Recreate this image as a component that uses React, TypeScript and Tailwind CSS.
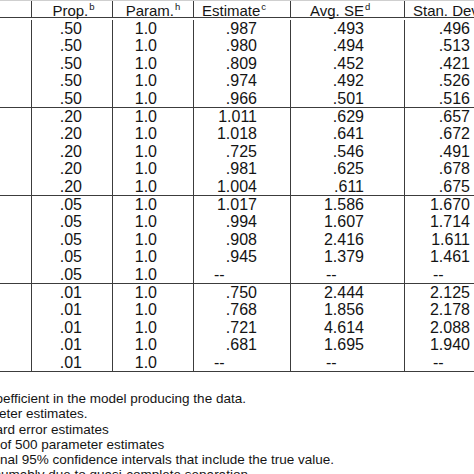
import React from "react";

type Group = { prop: string; est: string[]; se: string[]; sd: string[] };

const groups: Group[] = [
  {
    prop: ".50",
    est: [".987", ".980", ".809", ".974", ".966"],
    se: [".493", ".494", ".452", ".492", ".501"],
    sd: [".496", ".513", ".421", ".526", ".516"],
  },
  {
    prop: ".20",
    est: ["1.011", "1.018", ".725", ".981", "1.004"],
    se: [".629", ".641", ".546", ".625", ".611"],
    sd: [".657", ".672", ".491", ".678", ".675"],
  },
  {
    prop: ".05",
    est: ["1.017", ".994", ".908", ".945", "--"],
    se: ["1.586", "1.607", "2.416", "1.379", "--"],
    sd: ["1.670", "1.714", "1.611", "1.461", "--"],
  },
  {
    prop: ".01",
    est: [".750", ".768", ".721", ".681", "--"],
    se: ["2.444", "1.856", "4.614", "1.695", "--"],
    sd: ["2.125", "2.178", "2.088", "1.940", "--"],
  },
];

const footnotes: { pre: string; rest: string; ml: string }[] = [
  { pre: "co", rest: "efficient in the model producing the data.", ml: "ml-[3px]" },
  { pre: "param", rest: "eter estimates.", ml: "ml-[-1px]" },
  { pre: "standa", rest: "rd error estimates", ml: "ml-[3px]" },
  { pre: "deviation ", rest: "of 500 parameter estimates", ml: "ml-[0px]" },
  { pre: "nomi", rest: "nal 95% confidence intervals that include the true value.", ml: "ml-[0px]" },
  { pre: "Pres", rest: "umably due to quasi-complete separation.", ml: "ml-[1px]" },
];

function Sup({ children }: { children: React.ReactNode }) {
  return <span className="relative top-[-6px] text-[9.5px] leading-none ml-[1px]">{children}</span>;
}

const line = "border-l border-[#3c3c3c]";

function NumCell({ v, w, pr, pl }: { v: string; w: string; pr: string; pl: string }) {
  const dash = v === "--";
  return (
    <div className={`${w} shrink-0 flex ${dash ? "justify-start " + pl : "justify-end " + pr} ${line}`}>{v}</div>
  );
}

export default function App() {
  return (
    <div
      className="w-[474px] h-[474px] overflow-hidden bg-white text-[#141414]"
      style={{ fontFamily: '"Liberation Sans", Arial, sans-serif' }}
    >
      <div className="w-[520px]">
        {/* header */}
        <div className="flex h-[18px] text-[15px] border-t border-[#cfcfcf] border-b border-b-[#3c3c3c] leading-[17px]">
          <div className="w-[31px] shrink-0" />
          <div className={`w-[81px] shrink-0 ${line} text-center pt-[1px] pl-[3px] whitespace-nowrap`}>
            Prop.<Sup>b</Sup>
          </div>
          <div className={`w-[81px] shrink-0 ${line} text-center pt-[1px] whitespace-nowrap`}>
            Param.<Sup>h</Sup>
          </div>
          <div className={`w-[97px] shrink-0 ${line} pl-[8px] pt-[1px] whitespace-nowrap`}>
            Estimate<Sup>c</Sup>
          </div>
          <div className={`w-[114px] shrink-0 ${line} pl-[19px] pt-[1px] whitespace-nowrap`}>
            Avg. SE<Sup>d</Sup>
          </div>
          <div className={`flex-1 ${line} pl-[8px] pt-[1px] whitespace-nowrap`}>
            Stan. Dev.<Sup>e</Sup>
          </div>
        </div>
        {groups.map((g, gi) => (
          <div
            key={gi}
            className={`flex flex-col text-[16px] border-b border-[#3c3c3c] ${gi === 0 ? "h-[90px] pt-[2px]" : "h-[88px]"}`}
          >
            {[0, 1, 2, 3, 4].map((r) => (
              <div key={r} className="flex h-[17.4px] leading-[17.4px] shrink-0">
                <div className="w-[31px] shrink-0" />
                <div className={`w-[81px] shrink-0 ${line} flex justify-end pr-[30px]`}>{g.prop}</div>
                <div className={`w-[81px] shrink-0 ${line} flex justify-end pr-[36px]`}>1.0</div>
                <NumCell v={g.est[r]} w="w-[97px]" pr="pr-[33px]" pl="pl-[20px]" />
                <NumCell v={g.se[r]} w="w-[114px]" pr="pr-[40px]" pl="pl-[35px]" />
                <NumCell v={g.sd[r]} w="w-[92px]" pr="pr-[26px]" pl="pl-[28px]" />
                <div className={`flex-1 ${line}`} />
              </div>
            ))}
            <div className="flex-1 flex">
              <div className="w-[31px] shrink-0" />
              <div className={`w-[81px] shrink-0 ${line}`} />
              <div className={`w-[81px] shrink-0 ${line}`} />
              <div className={`w-[97px] shrink-0 ${line}`} />
              <div className={`w-[114px] shrink-0 ${line}`} />
              <div className={`w-[92px] shrink-0 ${line}`} />
              <div className={`flex-1 ${line}`} />
            </div>
          </div>
        ))}
      </div>
      <div className="mt-[19px] text-[13.5px] leading-[15.3px] flex flex-col">
        {footnotes.map((f, i) => (
          <div key={i} className={`flex whitespace-nowrap ${f.ml}`}>
            <div className="w-0 flex justify-end">
              <span>{f.pre}</span>
            </div>
            <span>{f.rest}</span>
          </div>
        ))}
      </div>
    </div>
  );
}
